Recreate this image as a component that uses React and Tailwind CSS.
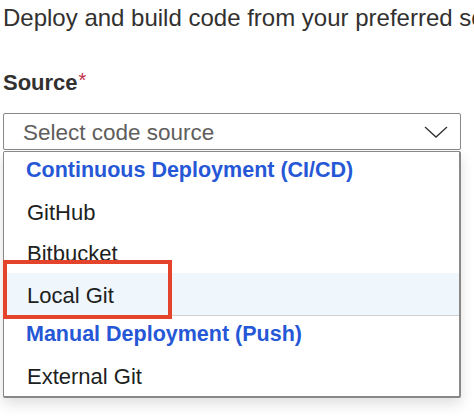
const GROUPS = [
  { title: 'Continuous Deployment (CI/CD)', items: ['GitHub', 'Bitbucket', 'Local Git'] },
  { title: 'Manual Deployment (Push)', items: ['External Git'] },
];

const ITEM_H = {
  GitHub: 'h-[41px]',
  Bitbucket: 'h-[40px]',
  'External Git': 'h-[40px]',
};

export default function App() {
  return (
    <div
      className="w-[474px] h-[418px] overflow-hidden bg-white text-[#323130] pl-[3px]"
      style={{ fontFamily: '"Liberation Sans", Arial, sans-serif' }}
    >
      <p className="text-[24px] leading-[32px] whitespace-nowrap pt-[2px]">
        Deploy and build code from your preferred source
      </p>

      <div className="mt-[33px] h-[30px] text-[22px] leading-[30px] font-bold flex items-start pt-[1px]">
        Source
        <span className="text-[#c4314b] text-[20px] leading-[20px] ml-[1px] mt-[2px] font-normal">*</span>
      </div>

      <div className="mt-[16px] w-[458px]">
        {/* select box */}
        <div className="h-[37px] border border-[#8a8886] rounded-[2px] flex items-center pl-[19px] pr-[12px] pt-[2px]">
          <span className="flex-1 text-[22.5px] text-[#605e5c]">Select code source</span>
          <svg width="24" height="12" viewBox="0 0 24 12" className="text-[#323130] -mt-[2px]">
            <path d="M1 1l11 10L23 1" fill="none" stroke="currentColor" strokeWidth="1.3" />
          </svg>
        </div>

        {/* dropdown */}
        <div className="mt-[1px] border border-r-2 border-b-2 border-[#8a8886] rounded-[2px] shadow-[0_6px_14px_rgba(0,0,0,0.13)] bg-white">
          {GROUPS.map((g) => (
            <div key={g.title}>
              <div className="h-[40px] flex items-center pl-[22px] pb-[3px] text-[21.5px] font-bold text-[#2557d6]">
                {g.title}
              </div>
              {g.items.map((item) => {
                if (item === 'Local Git') {
                  return (
                    <div
                      key={item}
                      className="relative h-[43px] flex items-center pl-[23px] pt-[2px] text-[22px] bg-[#eff6fc] border-b border-[#d2d0ce] text-[#201f1e]"
                    >
                      {item}
                      <span className="absolute left-[-1px] top-[-13px] w-[169px] h-[59px] border-[4px] border-[#e4442b]" />
                    </div>
                  );
                }
                return (
                  <div
                    key={item}
                    className={`${ITEM_H[item]} flex items-center pl-[23px] text-[22px] text-[#201f1e]`}
                  >
                    {item}
                  </div>
                );
              })}
            </div>
          ))}
        </div>
      </div>
    </div>
  );
}
